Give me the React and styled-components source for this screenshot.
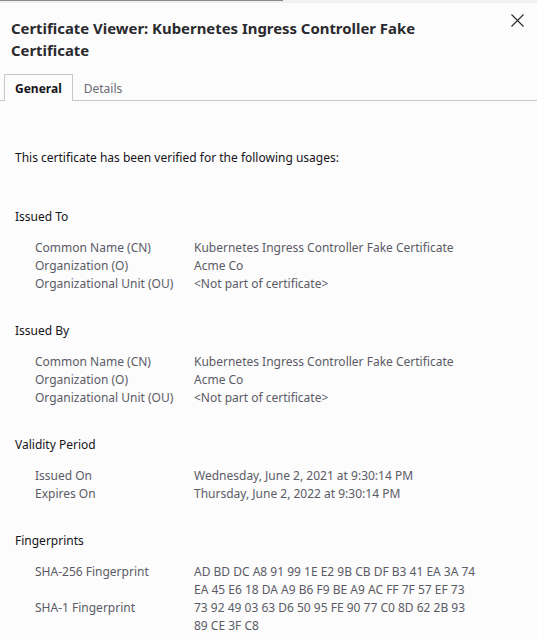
import React from 'react';
import styled, { createGlobalStyle } from 'styled-components';

const GlobalStyle = createGlobalStyle`
  html, body {
    margin: 0;
    padding: 0;
    background: #fcfcfc;
    font-family: "Noto Sans", "Open Sans", sans-serif;
    color: #15141a;
  }
`;

const Page = styled.div`
  width: 537px;
  height: 640px;
  overflow: hidden;
  background: #fcfcfc;
`;

const TopBar = styled.div`
  display: flex;
  height: 3px;
  background: #f0f0f0;
`;

const Progress = styled.div`
  width: 283px;
  height: 1px;
  background: #8a8a8a;
`;

const Header = styled.div`
  display: flex;
  justify-content: space-between;
  align-items: flex-start;
  padding: 14px 12px 0 11px;
`;

const Title = styled.h1`
  margin: 0;
  font-size: 14.9px;
  line-height: 22px;
  font-weight: 700;
  color: #2a2a2e;
  max-width: 430px;
`;

const Close = styled.button`
  border: none;
  background: none;
  padding: 0;
  margin-top: -5px;
  width: 16px;
  height: 16px;
  display: flex;
  align-items: center;
  justify-content: center;
  cursor: pointer;
`;

const Tabs = styled.div`
  display: flex;
  margin-top: 13px;
  padding-left: 4px;
  border-bottom: 1px solid #c8c8c8;
  height: 26px;
`;

const Tab = styled.div`
  padding: 1px 10px 0;
  font-size: 12px;
  line-height: 26px;
  margin-bottom: -1px;
  font-weight: ${p => (p.$active ? 700 : 400)};
  color: ${p => (p.$active ? '#15141a' : '#6b6b73')};
  background: ${p => (p.$active ? '#fcfcfc' : 'transparent')};
  border: 1px solid ${p => (p.$active ? '#c8c8c8' : 'transparent')};
  border-bottom: none;
`;

const Body = styled.div`
  padding: 48px 15px 0 15px;
  font-size: 12px;
`;

const Intro = styled.p`
  margin: 0 0 41px;
  line-height: 18px;
`;

const Section = styled.section`
  margin-bottom: 29px;
`;

const SectionTitle = styled.h2`
  margin: 0 0 13px;
  font-size: 12px;
  font-weight: 400;
  line-height: 18px;
  color: #15141a;
`;

const Rows = styled.div`
  display: grid;
  grid-template-columns: 159px 1fr;
  padding-left: 20px;
  color: #5b5b66;
  line-height: 18px;
`;

const Label = styled.div``;

const Value = styled.div`
  max-width: 284px;
`;

const sections = [
  {
    title: 'Issued To',
    rows: [
      ['Common Name (CN)', 'Kubernetes Ingress Controller Fake Certificate'],
      ['Organization (O)', 'Acme Co'],
      ['Organizational Unit (OU)', '<Not part of certificate>'],
    ],
  },
  {
    title: 'Issued By',
    rows: [
      ['Common Name (CN)', 'Kubernetes Ingress Controller Fake Certificate'],
      ['Organization (O)', 'Acme Co'],
      ['Organizational Unit (OU)', '<Not part of certificate>'],
    ],
  },
  {
    title: 'Validity Period',
    rows: [
      ['Issued On', 'Wednesday, June 2, 2021 at 9:30:14 PM'],
      ['Expires On', 'Thursday, June 2, 2022 at 9:30:14 PM'],
    ],
  },
  {
    title: 'Fingerprints',
    rows: [
      ['SHA-256 Fingerprint', 'AD BD DC A8 91 99 1E E2 9B CB DF B3 41 EA 3A 74 EA 45 E6 18 DA A9 B6 F9 BE A9 AC FF 7F 57 EF 73'],
      ['SHA-1 Fingerprint', '73 92 49 03 63 D6 50 95 FE 90 77 C0 8D 62 2B 93 89 CE 3F C8'],
    ],
  },
];

const App = () => {
  return (
    <Page>
      <GlobalStyle />
      <TopBar>
        <Progress />
      </TopBar>
      <Header>
        <Title>Certificate Viewer: Kubernetes Ingress Controller Fake Certificate</Title>
        <Close aria-label="Close">
          <svg width="13" height="13" viewBox="0 0 13 13">
            <path d="M0.5 0.5 L12.5 12.5 M12.5 0.5 L0.5 12.5" stroke="#2a2a2e" strokeWidth="1.1" />
          </svg>
        </Close>
      </Header>
      <Tabs>
        <Tab $active>General</Tab>
        <Tab>Details</Tab>
      </Tabs>
      <Body>
        <Intro>This certificate has been verified for the following usages:</Intro>
        {sections.map(s => (
          <Section key={s.title}>
            <SectionTitle>{s.title}</SectionTitle>
            <Rows>
              {s.rows.map(([k, v]) => (
                <React.Fragment key={k}>
                  <Label>{k}</Label>
                  <Value>{v}</Value>
                </React.Fragment>
              ))}
            </Rows>
          </Section>
        ))}
      </Body>
    </Page>
  );
};

export default App;
